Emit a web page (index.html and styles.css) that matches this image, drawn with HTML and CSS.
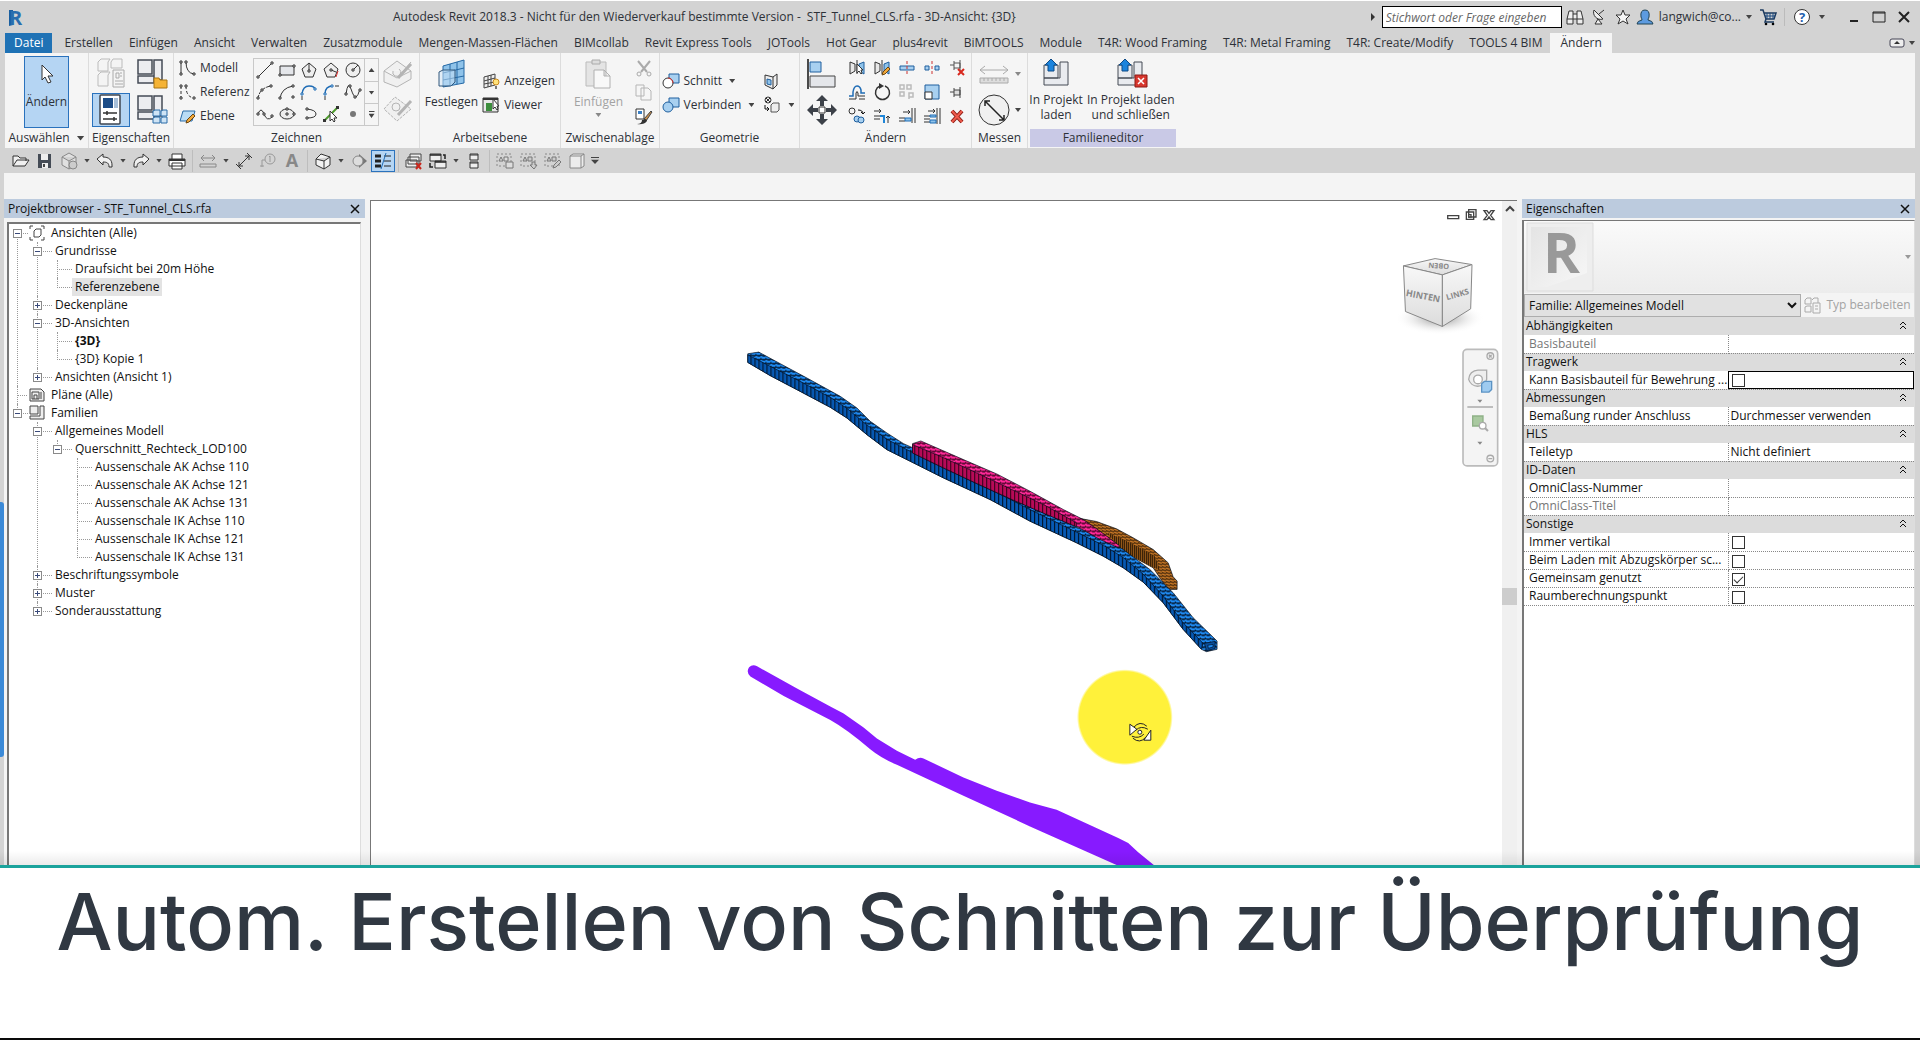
FILE: index.html
```html
<!DOCTYPE html>
<html lang="de">
<head>
    <meta charset="UTF-8">
    <meta name="viewport" content="width=device-width, initial-scale=1.0">
    <title>Autodesk Revit 2018.3 - STF_Tunnel_CLS.rfa</title>
    <link rel="stylesheet" href="styles.css">
</head>
<body>
    <div class="app">
        <header class="titlebar">
            <svg class="logo" width="20" height="30" viewBox="0 0 20 30"><path d="M2 8h4v15l-4 1z" fill="#1b5fa0"/><text x="2" y="23" font-size="20" font-weight="700" fill="#2a6eae">R</text></svg>
            <h1 class="title"><span>Autodesk Revit 2018.3 - Nicht für den Wiederverkauf bestimmte Version -</span><span>STF_Tunnel_CLS.rfa - 3D-Ansicht: {3D}</span></h1>
            <div class="infocenter">
                <svg width="6" height="10" viewBox="0 0 6 10"><path d="M1 1l4 4-4 4z" fill="#333"/></svg>
                <input type="text" class="search" aria-label="Suche" placeholder="Stichwort oder Frage eingeben">
                <button class="slot" aria-label="Suchen"><svg width="18" height="18" viewBox="0 0 18 18"><path d="M3 3h4v3h4V3h4l2 8v5h-6v-5H7v5H1v-5z" fill="#eee" stroke="#333"/><path d="M1 11h6M11 11h6M7 6v5M11 6v5" stroke="#333"/></svg></button>
                <button class="slot" aria-label="Abonnement"><svg width="16" height="18" viewBox="0 0 16 18"><path d="M3 2c-2 5 3 11 9 9zM4 16l3-5 4 5zM8 6l5-4" fill="#eee" stroke="#333"/></svg></button>
                <button class="slot" aria-label="Favoriten"><svg width="18" height="18" viewBox="0 0 18 18"><path d="M9 2l2 5h5l-4 4 2 5-5-3-5 3 2-5-4-4h5z" fill="#f5f5f5" stroke="#333"/></svg></button>
                <button class="account"><svg width="18" height="18" viewBox="0 0 18 18"><path d="M1 16q0-3 5-4 0-1-1-3-1-7 4-7t4 7q-1 2-1 3 5 1 5 4z" fill="#5d9be0" stroke="#245"/></svg>langwich@co...<i class="arrow"></i></button>
                <button class="slot" aria-label="App Store"><svg width="18" height="18" viewBox="0 0 18 18"><path d="M1 2h3l3 9h8l2-6H5M7 11l-1 3h9" fill="none" stroke="#1d3b60" stroke-width="1.5"/><path d="M8 5v6M11 5v6M14 5v6M6 8h10" stroke="#1d4b80"/><circle cx="7" cy="16" r="1.3"/><circle cx="14" cy="16" r="1.3"/></svg></button>
                <button class="help" aria-label="Hilfe"><svg width="18" height="18" viewBox="0 0 18 18"><circle cx="9" cy="9" r="7.5" fill="#fff" stroke="#333"/><text x="9" y="14" font-size="13" font-weight="700" text-anchor="middle" fill="#1f5fae">?</text></svg><i class="arrow"></i></button>
                <button class="win" aria-label="Minimieren"><svg width="14" height="14" viewBox="0 0 14 14"><path d="M3 11h8" stroke="#222" stroke-width="2"/></svg></button>
                <button class="win" aria-label="Maximieren"><svg width="14" height="14" viewBox="0 0 14 14"><path d="M1 2h12v10H1zM1 3h12" fill="none" stroke="#222"/></svg></button>
                <button class="win" aria-label="Schließen"><svg width="14" height="14" viewBox="0 0 14 14"><path d="M2 2l10 10M12 2L2 12" stroke="#222" stroke-width="2"/></svg></button>
            </div>
        </header>

        <nav class="tabs">
            <a href="#" class="file">Datei</a><a href="#">Erstellen</a><a href="#">Einfügen</a><a href="#">Ansicht</a><a href="#">Verwalten</a><a href="#">Zusatzmodule</a><a href="#">Mengen-Massen-Flächen</a><a href="#">BIMcollab</a><a href="#">Revit Express Tools</a><a href="#">JOTools</a><a href="#">Hot Gear</a><a href="#">plus4revit</a><a href="#">BiMTOOLS</a><a href="#">Module</a><a href="#">T4R: Wood Framing</a><a href="#">T4R: Metal Framing</a><a href="#">T4R: Create/Modify</a><a href="#">TOOLS 4 BIM</a><a href="#" class="active">Ändern</a>
            <button class="minimize" aria-label="Multifunktionsleiste"><svg width="16" height="10" viewBox="0 0 16 10"><rect x="1" y="1" width="14" height="8" rx="2" fill="#eee" stroke="#445"/><path d="M5 6l3-3 3 3z" fill="#333"/></svg><i class="arrow"></i></button>
        </nav>

        <div class="ribbon">
            <section class="panel auswaehlen">
                <div class="tools">
                    <button class="big selected"><svg width="16" height="22" viewBox="0 0 16 22"><path d="M3 2v15l3-3 3 6 3-1-3-6h5z" fill="#fff" stroke="#333"/></svg><span>Ändern</span></button>
                </div>
                <h2>Auswählen<i class="arrow wide"></i></h2>
            </section>
            <section class="panel eigenschaften">
                <div class="tools props">
                    <button aria-label="Typeigenschaften"><svg width="32" height="32" viewBox="0 0 32 32"><path d="M3 4l3-3h9l-2 3v9H3zM16 4l2-3h9v9h-11zM3 17l3-3h9l-2 3v11H3z" fill="#f4f4f4" stroke="#bbb"/><path d="M18 12h11v17H18z" fill="#f4f4f4" stroke="#aaa"/><path d="M21 15h3v5h-3zM25 15h2M25 18h2M20 23h8M20 26h8" stroke="#aaa" fill="none"/></svg></button>
                    <button aria-label="Familienkategorie"><svg width="32" height="32" viewBox="0 0 32 32"><path d="M2 2h14v14H2zM18 2h8v20h-8zM2 18h16v7H2z" fill="#ecedf0" stroke="#444b55" stroke-width="1.5"/><path d="M18 20h5l1 2h7v8H18z" fill="#f5b335" stroke="#a87412"/></svg></button>
                    <button class="selected" aria-label="Eigenschaften"><svg width="32" height="32" viewBox="0 0 32 32"><rect x="5" y="1" width="20" height="29" rx="1" fill="#fff" stroke="#3f4650" stroke-width="1.5"/><path d="M8 4h10v10H8z" fill="#1c4c86"/><path d="M19 4h4v10h-4z" fill="#a7bfd8"/><path d="M8 19h14M8 25h14M12 17v4M19 23v4" stroke="#333" stroke-width="1.5"/></svg></button>
                    <button aria-label="Familientypen"><svg width="32" height="32" viewBox="0 0 32 32"><path d="M2 2h14v14H2zM18 2h8v20h-8zM2 18h16v7H2z" fill="#ecedf0" stroke="#444b55" stroke-width="1.5"/><path d="M17 17l2-1h5v6h-7zM25 17l2-1h4v6h-6zM17 24l2-1h5v6h-7zM25 24l2-1h4v6h-6z" fill="#cfe4f5" stroke="#2a6ca8"/></svg></button>
                </div>
                <h2>Eigenschaften</h2>
            </section>
            <section class="panel zeichnen">
                <div class="tools">
                    <div class="stack three">
                        <button><svg width="17" height="17" viewBox="0 0 17 17"><path d="M2 2v13M7 2q0 11 8 12" fill="none" stroke="#333"/><path d="M1 1h2v2H1zM1 13h2v2H1zM6 1h2v2H6zM14 13h2v2h-2z" fill="#fff" stroke="#333"/></svg>Modell</button>
                        <button><svg width="17" height="17" viewBox="0 0 17 17"><path d="M2 2v13M7 2q0 11 8 12" fill="none" stroke="#333" stroke-dasharray="3 2"/><path d="M1 1h2v2H1zM1 13h2v2H1zM6 1h2v2H6zM14 13h2v2h-2z" fill="#fff" stroke="#333"/></svg>Referenz</button>
                        <button><svg width="17" height="17" viewBox="0 0 17 17"><path d="M4 3h12l-3 10H1z" fill="#b9dcf5" stroke="#2a6ca8"/><path d="M7 15l1-3 6-6 2 2-6 6z" fill="#f2a93b" stroke="#694511"/></svg>Ebene</button>
                    </div>
                    <div class="gallery">
                        <div class="shapes">
                            <button aria-label="Linie"><svg width="18" height="18" viewBox="0 0 18 18"><path d="M2 16L16 2" stroke="#333"/><path d="M1 15h2v2H1zM15 1h2v2h-2z" fill="#fff" stroke="#333"/></svg></button>
                            <button aria-label="Rechteck"><svg width="18" height="18" viewBox="0 0 18 18"><path d="M2 5h14v9H2z" fill="#e4e6ea" stroke="#333"/><path d="M1 13h2v2H1zM15 4h2v2h-2z" fill="#fff" stroke="#333"/></svg></button>
                            <button aria-label="Polygon innen"><svg width="18" height="18" viewBox="0 0 18 18"><path d="M9 2l7 6-3 8H5L2 8z" fill="#eee" stroke="#333"/><path d="M9 2v7" stroke="#333"/><path d="M8 9h2v2H8z" fill="#fff" stroke="#333"/></svg></button>
                            <button aria-label="Polygon außen"><svg width="18" height="18" viewBox="0 0 18 18"><path d="M9 2l7 6-3 8H5L2 8z" fill="#eee" stroke="#333"/><path d="M9 9l5 2" stroke="#333"/><path d="M16 10l-2 6" stroke="#d33"/><path d="M8 8h2v2H8z" fill="#fff" stroke="#333"/></svg></button>
                            <button aria-label="Kreis"><svg width="18" height="18" viewBox="0 0 18 18"><circle cx="9" cy="9" r="7" fill="#eee" stroke="#333"/><path d="M9 9l5-5" stroke="#333"/><path d="M8 8h2v2H8z" fill="#fff" stroke="#333"/></svg></button>
                            <button aria-label="Bogen"><svg width="18" height="18" viewBox="0 0 18 18"><path d="M2 16Q3 5 15 3" fill="none" stroke="#333" stroke-dasharray="4 1"/><path d="M1 14h2v2H1zM5 6h2v2H5zM14 2h2v2h-2z" fill="#fff" stroke="#333"/></svg></button>
                            <button aria-label="Mittelpunktbogen"><svg width="18" height="18" viewBox="0 0 18 18"><path d="M2 16Q3 5 15 3" fill="none" stroke="#333"/><path d="M1 14h2v2H1zM14 2h2v2h-2z" fill="#fff" stroke="#333"/><path d="M13 14h4M15 12v4" stroke="#333"/></svg></button>
                            <button aria-label="Tangentialbogen"><svg width="18" height="18" viewBox="0 0 18 18"><path d="M2 11Q3 3 9 3t6 4" fill="none" stroke="#1f6cb5" stroke-width="1.5"/><path d="M1 10h2v2H1zM14 5h2v2h-2z" fill="#fff" stroke="#1f6cb5"/><path d="M2 13v4" stroke="#333"/></svg></button>
                            <button aria-label="Abrundung"><svg width="18" height="18" viewBox="0 0 18 18"><path d="M3 11q0-8 8-8" fill="none" stroke="#1f6cb5" stroke-width="1.5"/><path d="M2 10h2v2H2zM9 2h2v2H9z" fill="#fff" stroke="#1f6cb5"/><path d="M3 13v4M13 3h4" stroke="#333"/></svg></button>
                            <button aria-label="Spline"><svg width="18" height="18" viewBox="0 0 18 18"><path d="M2 11q2-14 5-5t5 8 4-8" fill="none" stroke="#333"/><path d="M5 2h2v2H5zM1 10h2v2H1zM10 13h2v2h-2zM15 6h2v2h-2z" fill="#fff" stroke="#333"/></svg></button>
                            <button aria-label="Spline durch Punkte"><svg width="18" height="18" viewBox="0 0 18 18"><path d="M2 9q3-8 6 0t8 3" fill="none" stroke="#333"/><path d="M1 8h2v2H1zM7 8h2v2H7zM15 10h2v2h-2z" fill="#fff" stroke="#333"/></svg></button>
                            <button aria-label="Ellipse"><svg width="18" height="18" viewBox="0 0 18 18"><ellipse cx="9" cy="9" rx="7" ry="5" fill="#eee" stroke="#333"/><path d="M8 8h2v2H8zM15 8h2v2h-2zM8 3h2v2H8z" fill="#fff" stroke="#333"/></svg></button>
                            <button aria-label="Teilellipse"><svg width="18" height="18" viewBox="0 0 18 18"><path d="M7 4q9 1 9 5t-9 4" fill="none" stroke="#333"/><path d="M6 3h2v2H6zM6 12h2v2H6z" fill="#fff" stroke="#333"/></svg></button>
                            <button aria-label="Linien auswählen"><svg width="18" height="18" viewBox="0 0 18 18"><path d="M2 16L16 2" stroke="#4d9a2c" stroke-width="2"/><path d="M1 14h3v3H1zM14 1h3v3h-3z" fill="#333"/><path d="M8 6v10l2-2 2 3 1-1-1-3h3z" fill="#fff" stroke="#333"/></svg></button>
                            <button aria-label="Punktelement"><svg width="18" height="18" viewBox="0 0 18 18"><circle cx="9" cy="9" r="3" fill="#777"/></svg></button>
                        </div>
                        <div class="spin"><button aria-label="Hoch"><i class="arrow up"></i></button><button aria-label="Runter"><i class="arrow"></i></button><button aria-label="Mehr"><i class="arrow bar"></i></button></div>
                    </div>
                    <div class="stack two dim">
                        <button aria-label="Auf Fläche"><svg width="30" height="30" viewBox="0 0 30 30"><path d="M1 12L14 2l14 10v8L14 28 1 23zM1 12l13 7 14-7M10 12a4 4 0 1 0 6-2M16 17L28 3" fill="#f0f0f0" stroke="#b4b4b4"/><path d="M15 19L28 5" stroke="#b4b4b4" stroke-width="3"/></svg></button>
                        <button aria-label="Auf Arbeitsebene"><svg width="30" height="30" viewBox="0 0 30 30"><path d="M1 14L12 2l16 12-14 12z" fill="#f0f0f0" stroke="#b4b4b4" stroke-dasharray="3 1"/><circle cx="13" cy="12" r="4" fill="none" stroke="#b4b4b4"/><path d="M15 20L28 6" stroke="#b4b4b4" stroke-width="3"/></svg></button>
                    </div>
                </div>
                <h2>Zeichnen</h2>
            </section>
            <section class="panel arbeitsebene">
                <div class="tools">
                    <button class="big"><svg width="30" height="32" viewBox="0 0 30 32"><path d="M6 8l21-6v23L6 29z" fill="#8fc3ea" stroke="#2468a5"/><path d="M13 6v22M20 4v22M6 15l21-5M6 22l21-4" stroke="#2468a5"/><path d="M2 14l4-2h12v12l-4 4H2z" fill="#cfe6f7" fill-opacity=".5" stroke="#33597d"/></svg><span>Festlegen</span></button>
                    <div class="stack two">
                        <button><svg width="18" height="18" viewBox="0 0 18 18"><path d="M2 5l11-3v11L2 16zM6 4v11M9 3v11M2 9l11-3M2 12l11-2" fill="#eee" stroke="#444"/><circle cx="14" cy="10" r="3" fill="#ffe27a" stroke="#c8881d"/><path d="M13 14h2v3h-2z" fill="#777"/></svg>Anzeigen</button>
                        <button><svg width="18" height="18" viewBox="0 0 18 18"><path d="M1 2h15v14H1z" fill="#e8e8e8" stroke="#333"/><path d="M1 3h15" stroke="#333" stroke-width="2"/><path d="M4 7h6v8H4z" fill="#3c8d3c"/><path d="M11 3v10l2-2 2 3 1-1-1-3h2z" fill="#fff" stroke="#333"/></svg>Viewer</button>
                    </div>
                </div>
                <h2>Arbeitsebene</h2>
            </section>
            <section class="panel zwischenablage">
                <div class="tools">
                    <button class="big dim"><svg width="28" height="32" viewBox="0 0 28 32"><path d="M2 4h20v24H2z" fill="#e4e4e4" stroke="#bbb"/><path d="M8 2h8v4H8z" fill="#ddd" stroke="#aaa"/><path d="M10 12h10l6 6v12H10zM20 12v6h6" fill="#f8f8f8" stroke="#b0b0b0"/></svg><span>Einfügen</span><i class="arrow"></i></button>
                    <div class="stack three">
                        <button aria-label="Ausschneiden"><svg width="18" height="17" viewBox="0 0 18 17"><path d="M3 1l9 11M15 1L6 12" stroke="#aaa" stroke-width="2"/><circle cx="4" cy="14" r="2" fill="none" stroke="#aaa"/><circle cx="14" cy="14" r="2" fill="none" stroke="#aaa"/></svg></button>
                        <button aria-label="Kopieren"><svg width="18" height="17" viewBox="0 0 18 17"><path d="M1 1h8v11H1zM6 4h7l3 3v9H6z" fill="#f6f6f6" stroke="#b5b5b5"/></svg></button>
                        <button aria-label="Eigenschaften anpassen"><svg width="18" height="17" viewBox="0 0 18 17"><path d="M1 1h8v10H1z" fill="#fff" stroke="#333"/><path d="M3 3h4v3H3z" fill="#3a7fc4"/><path d="M9 11l7-8 1 1-6 9z" fill="#c88d4c" stroke="#444"/><path d="M2 16q5 0 5-4l4-1 1 2q-3 4-10 3z" fill="#333"/></svg></button>
                    </div>
                </div>
                <h2>Zwischenablage</h2>
            </section>
            <section class="panel geometrie">
                <div class="tools">
                    <div class="stack two">
                        <button><svg width="18" height="18" viewBox="0 0 18 18"><path d="M7 2h10v9H7z" fill="#a8d0f0" stroke="#1f5f9e"/><circle cx="6" cy="11" r="5" fill="#fff" stroke="#333"/><path d="M6 6a5 5 0 0 1 5 5" fill="none" stroke="#d33"/></svg>Schnitt<i class="arrow"></i></button>
                        <button><svg width="18" height="18" viewBox="0 0 18 18"><path d="M7 2h10v9H7z" fill="#a8d0f0" stroke="#1f5f9e"/><circle cx="6" cy="11" r="5" fill="#a8d0f0" stroke="#1f5f9e"/></svg>Verbinden<i class="arrow"></i></button>
                    </div>
                    <div class="stack two">
                        <button aria-label="Flächen teilen"><svg width="18" height="18" viewBox="0 0 18 18"><path d="M2 3l8 2 4-3v11l-4 4-8-4zM10 5v12" fill="#eee" stroke="#333"/><path d="M4 7l4 1v5l-4-1z" fill="#8fc3ea" stroke="#1f5f9e"/></svg></button>
                        <button aria-label="Verbindung"><svg width="18" height="18" viewBox="0 0 18 18"><circle cx="5" cy="4" r="3" fill="none" stroke="#333"/><path d="M3 2l4 4M7 2L3 6" stroke="#333"/><path d="M8 9l2-2h6v7l-2 2H8z" fill="#eee" stroke="#555"/><path d="M2 9v4h3M4 11l2 2-2 2" fill="none" stroke="#111"/></svg><i class="arrow"></i></button>
                    </div>
                </div>
                <h2>Geometrie</h2>
            </section>
            <section class="panel aendern">
                <div class="tools">
                    <div class="stack two">
                        <button aria-label="Ausrichten"><svg width="32" height="32" viewBox="0 0 32 32"><path d="M2 1v30" stroke="#111" stroke-width="1.5"/><path d="M4 4h11v10H4z" fill="#a8d0f0" stroke="#1f5f9e"/><path d="M4 18h25v11H4z" fill="#e4e6ea" stroke="#444"/></svg></button>
                        <button aria-label="Verschieben"><svg width="32" height="32" viewBox="0 0 32 32"><path d="M16 1l6 6h-4v5h-4V7h-4zM16 31l6-6h-4v-5h-4v5h-4zM1 16l6-6v4h5v4H7v4zM31 16l-6-6v4h-5v4h5v4z" fill="#3c4149"/><path d="M13 13h6v6h-6z" fill="#fff" stroke="#333"/></svg></button>
                    </div>
                    <div class="modify">
                        <button aria-label="Spiegeln Achse wählen"><svg width="18" height="18" viewBox="0 0 18 18"><path d="M2 3l5 2v7l-5 3z" fill="#e8e8e8" stroke="#333"/><path d="M16 3l-5 2v7l5 3z" fill="#8fc3ea" stroke="#1f5f9e"/><path d="M9 1v14" stroke="#333"/><path d="M9 5v9l2-2 2 3 1-1-1-3h2z" fill="#fff" stroke="#333"/></svg></button>
                        <button aria-label="Spiegeln Achse zeichnen"><svg width="18" height="18" viewBox="0 0 18 18"><path d="M2 3l5 2v7l-5 3z" fill="#e8e8e8" stroke="#333"/><path d="M16 3l-5 2v7l5 3z" fill="#8fc3ea" stroke="#1f5f9e"/><path d="M9 1v14" stroke="#333"/><path d="M9 16l1-3 5-5 2 2-5 5z" fill="#f2a93b" stroke="#694511"/></svg></button>
                        <button aria-label="Element teilen"><svg width="18" height="18" viewBox="0 0 18 18"><path d="M2 7h14v4H2z" fill="#a8d0f0" stroke="#1f5f9e"/><path d="M9 2v14" stroke="#c33" stroke-dasharray="3 2"/></svg></button>
                        <button aria-label="Mit Lücke teilen"><svg width="18" height="18" viewBox="0 0 18 18"><path d="M2 7h4v4H2zM12 7h4v4h-4z" fill="#a8d0f0" stroke="#1f5f9e"/><path d="M9 2v14" stroke="#c33" stroke-dasharray="3 2"/></svg></button>
                        <button aria-label="Lösen"><svg width="18" height="18" viewBox="0 0 18 18"><path d="M2 6h4M6 2v9M6 4h6v5H6M12 1v11" fill="none" stroke="#555"/><path d="M10 10l6 6M16 10l-6 6" stroke="#d8281e" stroke-width="2"/></svg></button>
                        <button aria-label="Versatz"><svg width="18" height="18" viewBox="0 0 18 18"><path d="M1 13h4V9q1-6 4-6t4 4v3h4" fill="none" stroke="#1f6cb5" stroke-width="1.5"/><path d="M1 16h7v-6q1-3 2 0v3h7M11 16h6" fill="none" stroke="#333"/></svg></button>
                        <button aria-label="Drehen"><svg width="18" height="18" viewBox="0 0 18 18"><path d="M12 3a7 7 0 1 1-5 0" fill="none" stroke="#333" stroke-width="1.5"/><path d="M6 0l5 3-5 3z" fill="#333"/></svg></button>
                        <button aria-label="Reihe"><svg width="18" height="18" viewBox="0 0 18 18"><path d="M2 2h4v4H2zM9 2h4v4H9zM2 9h4v4H2zM11 16v-6h4v4h-4" fill="none" stroke="#bbb" stroke-width="1.5"/></svg></button>
                        <button aria-label="Skalieren"><svg width="18" height="18" viewBox="0 0 18 18"><path d="M2 2h14v14H2z" fill="#a8d0f0" stroke="#1f5f9e"/><path d="M2 9h7v7H2z" fill="#fff" stroke="#333"/></svg></button>
                        <button aria-label="Fixieren"><svg width="18" height="18" viewBox="0 0 18 18"><path d="M2 9h4M6 5v9M6 7h6v5H6M12 4v11" fill="#ddd" stroke="#444"/></svg></button>
                        <button aria-label="Kopieren"><svg width="18" height="18" viewBox="0 0 18 18"><circle cx="4" cy="4" r="3" fill="none" stroke="#333"/><path d="M10 3q5 0 5 4M13 5l2 2 2-2" fill="none" stroke="#111"/><circle cx="9" cy="12" r="3" fill="#a8d0f0" stroke="#1f5f9e"/><circle cx="13" cy="13" r="3" fill="#a8d0f0" stroke="#1f5f9e"/></svg></button>
                        <button aria-label="Stutzen Ecke"><svg width="18" height="18" viewBox="0 0 18 18"><path d="M1 4h7M6 2l2 2-2 2M15 16V9M13 11l2-2 2 2M1 12h6M1 9h6" fill="none" stroke="#333"/><path d="M7 9h4v7" fill="none" stroke="#1f86d8" stroke-width="2"/></svg></button>
                        <button aria-label="Stutzen einzeln"><svg width="18" height="18" viewBox="0 0 18 18"><path d="M5 5h7M10 3l2 2-2 2M1 11h6M1 14h6M14 1v15M17 1v15" fill="none" stroke="#333"/><path d="M7 11h6v3H7z" fill="#8fc3ea" stroke="#1f6cb5"/></svg></button>
                        <button aria-label="Stutzen mehrere"><svg width="18" height="18" viewBox="0 0 18 18"><path d="M5 4h7M10 2l2 2-2 2M1 9h6M1 12h6M1 15h6M14 1v16M17 1v16" fill="none" stroke="#333"/><path d="M7 8h6v2H7zM7 13h6v3H7z" fill="#8fc3ea" stroke="#1f6cb5"/></svg></button>
                        <button aria-label="Löschen"><svg width="18" height="18" viewBox="0 0 18 18"><path d="M4 4l10 11M14 4L4 15" stroke="#8c1b14" stroke-width="4"/><path d="M4 4l10 11M14 4L4 15" stroke="#ee5a4c" stroke-width="2"/></svg></button>
                    </div>
                </div>
                <h2>Ändern</h2>
            </section>
            <section class="panel messen">
                <div class="tools">
                    <div class="stack two">
                        <button class="dim" aria-label="Messen"><svg width="32" height="32" viewBox="0 0 32 32"><path d="M2 12h28M7 8l-5 4 5 4M25 8l5 4-5 4" fill="none" stroke="#aaa"/><path d="M2 20h28v5H2zM6 20v3M10 20v3M14 20v3M18 20v3M22 20v3M26 20v3" fill="#ddd" stroke="#aaa"/></svg><i class="arrow"></i></button>
                        <button aria-label="Bemaßung"><svg width="32" height="32" viewBox="0 0 32 32"><circle cx="16" cy="16" r="15" fill="#f0f0f0" stroke="#333"/><path d="M7 7l19 19M7 12V7h5M26 21v5h-5" fill="none" stroke="#222" stroke-width="1.5"/></svg><i class="arrow"></i></button>
                    </div>
                </div>
                <h2>Messen</h2>
            </section>
            <section class="panel familieneditor">
                <div class="tools">
                    <button class="big"><svg width="30" height="30" viewBox="0 0 30 30"><path d="M3 7h14v13H3zM19 4h8v23H3v-7h16z" fill="#e9ebef" stroke="#444b55"/><path d="M10 1l6 6h-3v6H7V7H4z" fill="#1c84dd" stroke="#0d4a86"/></svg><span>In Projekt<br>laden</span></button>
                    <button class="big"><svg width="32" height="30" viewBox="0 0 32 30"><path d="M3 7h14v13H3zM19 4h8v23H3v-7h16z" fill="#e9ebef" stroke="#444b55"/><path d="M10 1l6 6h-3v6H7V7H4z" fill="#1c84dd" stroke="#0d4a86"/><path d="M20 17h12v12H20z" fill="#d8372e" stroke="#8c1b14"/><path d="M23 20l6 6M29 20l-6 6" stroke="#fff" stroke-width="1.5"/></svg><span>In Projekt laden<br>und schließen</span></button>
                </div>
                <h2>Familieneditor</h2>
            </section>
        </div>

        <div class="quick">
            <button aria-label="Öffnen"><svg width="18" height="18" viewBox="0 0 18 18"><path d="M1 14V4h5l2 2h6v3M1 14l4-6h12l-4 6z" fill="#f0f0f0" stroke="#333"/></svg></button>
            <button aria-label="Speichern"><svg width="18" height="18" viewBox="0 0 18 18"><path d="M2 2h13v14H2z" fill="#444b55"/><path d="M5 2h7v6H5zM6 11h6v5H6z" fill="#eee"/><path d="M7 12h2v3H7z" fill="#444"/></svg></button>
            <button class="dim" aria-label="Synchronisieren"><svg width="18" height="18" viewBox="0 0 18 18"><path d="M2 5l7-4 7 4v8l-7 4-7-4zM2 5l7 4 7-4M9 9v8" fill="#e0e0e0" stroke="#888"/><circle cx="13" cy="13" r="4" fill="#ccc" stroke="#888"/></svg></button>
            <i class="arrow"></i>
            <button aria-label="Rückgängig"><svg width="18" height="18" viewBox="0 0 18 18"><path d="M1 7l6-5v3c6 0 9 3 9 8v2h-3c0-4-2-5-6-5v3z" fill="#f0f0f0" stroke="#333"/></svg></button>
            <i class="arrow"></i>
            <button aria-label="Wiederherstellen"><svg width="18" height="18" viewBox="0 0 18 18"><path d="M17 7l-6-5v3c-6 0-9 3-9 8v2h3c0-4 2-5 6-5v3z" fill="#f0f0f0" stroke="#333"/></svg></button>
            <i class="arrow"></i>
            <button aria-label="Drucken"><svg width="18" height="18" viewBox="0 0 18 18"><path d="M4 2h10v6H4zM1 7h16v7H1zM4 11h10v6H4z" fill="#fff" stroke="#333"/><path d="M1 8h16" stroke="#333" stroke-width="2"/></svg></button>
            <span class="sep"></span>
            <button class="dim" aria-label="Messen"><svg width="18" height="18" viewBox="0 0 18 18"><path d="M2 6h14M5 3L2 6l3 3M13 3l3 3-3 3M1 12h16v3H1z" fill="none" stroke="#888"/></svg></button>
            <i class="arrow"></i>
            <button aria-label="Bemaßung"><svg width="18" height="18" viewBox="0 0 18 18"><path d="M4 14L14 4M4 10v4h4M10 4h4v4M1 12l5 5M12 1l5 5" fill="none" stroke="#333"/></svg></button>
            <button class="dim" aria-label="Beschriftung"><svg width="18" height="18" viewBox="0 0 18 18"><circle cx="11" cy="7" r="5" fill="none" stroke="#999"/><path d="M10 5l1-1v6M6 8H3v7M1 14h4" fill="none" stroke="#999"/></svg></button>
            <button class="dim" aria-label="Text"><svg width="18" height="18" viewBox="0 0 18 18"><text x="9" y="15" font-size="18" font-weight="700" text-anchor="middle" fill="#888">A</text></svg></button>
            <span class="sep"></span>
            <button aria-label="3D-Ansicht"><svg width="18" height="18" viewBox="0 0 18 18"><path d="M2 7l5-5 9 3v8l-6 4-8-4zM10 9v8M2 7l8 2 6-4" fill="#f2f2f2" stroke="#333"/></svg></button>
            <i class="arrow"></i>
            <button class="dim" aria-label="Schnitt"><svg width="18" height="18" viewBox="0 0 18 18"><path d="M9 2l8 7-8 7z" fill="#777"/><circle cx="8" cy="9" r="5" fill="#ddd" stroke="#888"/></svg></button>
            <button class="selected" aria-label="Dünne Linien"><svg width="18" height="18" viewBox="0 0 18 18"><path d="M1 4h6M1 9h6M1 14h6" stroke="#222" stroke-width="3"/><path d="M10 4h7M10 9h7M10 14h7" stroke="#222"/><path d="M7 17L12 1" stroke="#1f6cb5"/></svg></button>
            <span class="sep"></span>
            <button aria-label="Inaktive schließen"><svg width="18" height="18" viewBox="0 0 18 18"><path d="M5 2h11v7H5zM3 5h11v7H3zM1 8h11v7H1z" fill="#eee" stroke="#444"/><path d="M11 11l5 6M16 11l-5 6" stroke="#c8281e" stroke-width="2"/></svg></button>
            <button aria-label="Fenster wechseln"><svg width="18" height="18" viewBox="0 0 18 18"><path d="M1 2h11v7H1zM6 9h11v7H6z" fill="#eee" stroke="#333"/><path d="M1 3h11M6 10h11M14 3h2v4M1 11v4h3" fill="none" stroke="#222" stroke-width="1.5"/></svg></button>
            <i class="arrow"></i>
            <button aria-label="Benutzeroberfläche"><svg width="18" height="18" viewBox="0 0 18 18"><path d="M5 2h8v6H5zM5 10h8v6H5zM5 3h8M5 11h8" fill="#eee" stroke="#333"/></svg></button>
            <span class="sep"></span>
            <button class="dim" aria-label="Auswahl speichern"><svg width="18" height="18" viewBox="0 0 18 18"><path d="M1 2h14v12H1z" fill="none" stroke="#888" stroke-dasharray="2 2"/><path d="M3 9l2-4 2 4zM8 5h4v4H8zM10 10h7v6h-7z" fill="#ddd" stroke="#777"/></svg></button>
            <button class="dim" aria-label="Auswahl laden"><svg width="18" height="18" viewBox="0 0 18 18"><path d="M1 2h14v12H1z" fill="none" stroke="#888" stroke-dasharray="2 2"/><path d="M3 9l2-4 2 4zM8 5h4v4H8zM12 10h3v3h2l-3 4-4-4h2z" fill="#ccc" stroke="#777"/></svg></button>
            <button class="dim" aria-label="Auswahl bearbeiten"><svg width="18" height="18" viewBox="0 0 18 18"><path d="M1 2h14v12H1z" fill="none" stroke="#888" stroke-dasharray="2 2"/><path d="M3 9l2-4 2 4zM8 5h4v4H8zM9 16l1-3 5-5 2 2-5 5z" fill="#ccc" stroke="#777"/></svg></button>
            <button class="dim" aria-label="Quader"><svg width="18" height="18" viewBox="0 0 18 18"><path d="M2 4l3-2h11v12l-3 2H2zM2 4h11v12M13 4l3-2" fill="#ececec" stroke="#888"/></svg></button>
            <i class="arrow bar wide"></i>
        </div>

        <main class="workspace">
            <aside class="dock browser">
                <div class="dock-head"><h2>Projektbrowser - STF_Tunnel_CLS.rfa</h2><button aria-label="Schließen"><svg width="10" height="10" viewBox="0 0 10 10"><path d="M1 1l8 8M9 1L1 9" stroke="#111" stroke-width="1.5"/></svg></button></div>
                <div class="tree-box">
                    <ul class="tree">
                        <li><span class="row"><b class="toggle"></b><svg width="16" height="16" viewBox="0 0 16 16"><path d="M4 1H1v3M12 1h3v3M4 15H1v-3M12 15h3v-3M5 6l2-2h5v6l-2 2H5z" fill="none" stroke="#444"/></svg>Ansichten (Alle)</span>
                            <ul>
                                <li><span class="row"><b class="toggle"></b>Grundrisse</span>
                                    <ul>
                                        <li><span class="row leaf">Draufsicht bei 20m Höhe</span></li>
                                        <li><span class="row leaf"><mark>Referenzebene</mark></span></li>
                                    </ul>
                                </li>
                                <li><span class="row"><b class="toggle plus"></b>Deckenpläne</span></li>
                                <li><span class="row"><b class="toggle"></b>3D-Ansichten</span>
                                    <ul>
                                        <li><span class="row leaf"><strong>{3D}</strong></span></li>
                                        <li><span class="row leaf">{3D} Kopie 1</span></li>
                                    </ul>
                                </li>
                                <li><span class="row"><b class="toggle plus"></b>Ansichten (Ansicht 1)</span></li>
                            </ul>
                        </li>
                        <li><span class="row leaf"><svg width="16" height="16" viewBox="0 0 16 16"><path d="M1 2h11l3 3v9H1zM3 5h7v7H3zM5 12V8h3v4M12 5v7" fill="#eee" stroke="#444"/></svg>Pläne (Alle)</span></li>
                        <li><span class="row"><b class="toggle"></b><svg width="16" height="16" viewBox="0 0 16 16"><path d="M1 1h8v8H1zM11 1h4v13H1v-3h10z" fill="#eee" stroke="#444"/></svg>Familien</span>
                            <ul>
                                <li><span class="row"><b class="toggle"></b>Allgemeines Modell</span>
                                    <ul>
                                        <li><span class="row"><b class="toggle"></b>Querschnitt_Rechteck_LOD100</span>
                                            <ul>
                                                <li><span class="row leaf">Aussenschale AK Achse 110</span></li>
                                                <li><span class="row leaf">Aussenschale AK Achse 121</span></li>
                                                <li><span class="row leaf">Aussenschale AK Achse 131</span></li>
                                                <li><span class="row leaf">Aussenschale IK Achse 110</span></li>
                                                <li><span class="row leaf">Aussenschale IK Achse 121</span></li>
                                                <li><span class="row leaf">Aussenschale IK Achse 131</span></li>
                                            </ul>
                                        </li>
                                    </ul>
                                </li>
                                <li><span class="row"><b class="toggle plus"></b>Beschriftungssymbole</span></li>
                                <li><span class="row"><b class="toggle plus"></b>Muster</span></li>
                                <li><span class="row"><b class="toggle plus"></b>Sonderausstattung</span></li>
                            </ul>
                        </li>
                    </ul>
                </div>
            </aside>

            <section class="view">
                <svg class="model" viewBox="370 201 1131 665" preserveAspectRatio="xMinYMin meet">
                    <defs>
                        <pattern id="blueSide" width="12" height="12" patternUnits="userSpaceOnUse"><path d="M0 0h12v12H0z" fill="#0659b4"/><path d="M2 0v12" stroke="#000a18" stroke-width="3"/></pattern>
                        <pattern id="blueTop" width="15" height="12" patternUnits="userSpaceOnUse"><path d="M0 0h15v12H0z" fill="#000814"/><path d="M0 1l6 5h9" fill="none" stroke="#1f8cf5" stroke-width="7"/></pattern>
                        <pattern id="pinkSide" width="12" height="12" patternUnits="userSpaceOnUse"><path d="M0 0h12v12H0z" fill="#b80a58"/><path d="M2 0v12" stroke="#2a0014" stroke-width="3"/></pattern>
                        <pattern id="pinkTop" width="15" height="12" patternUnits="userSpaceOnUse"><path d="M0 0h15v12H0z" fill="#2a0014"/><path d="M0 1l6 5h9" fill="none" stroke="#ff2898" stroke-width="8"/></pattern>
                        <pattern id="orange" width="12" height="9" patternUnits="userSpaceOnUse"><path d="M0 0h12v9H0z" fill="#140a00"/><path d="M0 2l12 4" stroke="#e88b2c" stroke-width="5"/></pattern>
                        <pattern id="orangeSide" width="12" height="12" patternUnits="userSpaceOnUse"><path d="M0 0h12v12H0z" fill="#a3601b"/><path d="M1 0v12M7 0v12" stroke="#140a00" stroke-width="3"/></pattern>
                        <linearGradient id="shade" x1="0" y1="0" x2="0" y2="1"><stop offset="0" stop-color="#f8f8f8"/><stop offset="1" stop-color="#dcdcdc"/></linearGradient>
                        <radialGradient id="ground"><stop offset="0" stop-color="#888"/><stop offset="1" stop-color="#fff" stop-opacity="0"/></radialGradient>
                        <radialGradient id="spot"><stop offset=".95" stop-color="#fff13a"/><stop offset="1" stop-color="#fff13a" stop-opacity="0"/></radialGradient>
                    </defs>
                    <!-- tunnel tubes -->
                    <svg x="730" y="340" width="500" height="320" viewBox="0 0 1500 960" stroke-linejoin="round" stroke="#000a18" stroke-width="2">
                        <path d="M1040 535L1100 546 1160 568 1210 595 1270 630 1315 670 1330 712 1342 725V750H1315L1290 715 1270 685 1215 655 1170 625 1110 580z" fill="url(#orange)"/>
                        <path d="M1130 580L1170 595 1230 625 1275 650 1290 690 1270 685 1215 655 1170 625z" fill="url(#orangeSide)" stroke="none"/>
                        <path d="M52 42L85 37 150 72 230 115 330 170 380 205 420 245 470 280 520 312 560 330 700 400 800 450 900 495 1000 545 1100 590 1180 630 1260 690 1330 760 1390 835 1462 905V930L1430 937 1415 930 1360 870 1300 790 1240 728 1180 685 1120 650 1040 610 900 545 780 480 640 415 540 365 470 330 410 285 350 235 300 203 200 150 120 108 52 68z" fill="url(#blueTop)"/>
                        <path d="M52 45L120 80 200 120 300 173 350 206 410 256 470 299 540 335 640 383 780 448 900 510 1040 578 1120 617 1180 654 1240 704 1300 770 1360 850 1420 912 1415 930 1360 870 1300 790 1240 728 1180 685 1120 650 1040 610 900 545 780 480 640 415 540 365 470 330 410 285 350 235 300 203 200 150 120 108 52 68z" fill="url(#blueSide)"/>
                        <path d="M1424 912l32-6v22l-26 6z" fill="#0b4f9b"/><path d="M1434 918l16-3v8l-14 4z" fill="#1f8cf5"/>
                        <path d="M547 312L572 304 700 360 800 403 900 455 1000 510 1060 540 1110 575 1168 618V626L1110 600 1040 560 950 525 850 482 740 432 640 385 547 340z" fill="url(#pinkTop)"/>
                        <path d="M547 315L640 354 740 400 850 452 950 500 1040 550V562L950 525 850 482 740 432 640 385 547 340z" fill="url(#pinkSide)"/>
                    </svg>
                    <svg x="730" y="650" width="500" height="216" viewBox="0 0 1500 648">
                        <path d="M60 82Q46 68 56 54 66 44 80 51L200 118 300 172 340 193 400 235 440 268 500 305 555 332Q568 322 580 328L700 385 800 425 900 460 980 482 1165 567 1195 582 1225 610 1272 648H1160L900 532 700 440 500 347Q450 325 420 300 350 240 300 212L160 140z" fill="#871aff"/>
                    </svg>
                    <circle cx="1125" cy="718" r="48" fill="url(#spot)"/>
                    <!-- orbit cursor -->
                    <g fill="none" stroke="#222"><path d="M1147 727q-7-6-13 1M1148 730q-7-4-12 1M1133 739q7 6 13-1M1132 737q7 3 12-2"/><path d="M1130 725v11l7-6zM1151 731v10l-7 0z" fill="#fff"/><circle cx="1140" cy="733" r="2" fill="#fff"/></g>
                    <!-- view cube, navigation bar -->
                    <svg x="1380" y="195" width="540" height="420" viewBox="0 0 1620 1260">
                        <ellipse cx="181" cy="370" rx="134" ry="50" fill="url(#ground)"/>
                        <g stroke="#888" stroke-width="3" fill="url(#shade)"><path d="M72 213L167 191 278 209 189 240z"/><path d="M72 213L189 240V395L78 350z"/><path d="M189 240L278 209 274 342 189 395z"/></g>
                        <g fill="#888" font-size="27" font-weight="700" text-anchor="middle"><text x="131" y="313" transform="rotate(11 131 304)">HINTEN</text><text x="235" y="307" font-size="24" transform="rotate(-16 235 300)">LINKS</text><text x="178" y="219" font-size="22" transform="rotate(184 178 212)">OBEN</text></g>
                        <rect x="251" y="464" width="104" height="350" rx="12" fill="#f4f4f4" stroke="#bbb" stroke-width="5"/>
                        <g fill="none" stroke="#aaa" stroke-width="4"><circle cx="333" cy="484" r="10"/><path d="M329 480l8 8M337 480l-8 8M327 792h12M264 637h77"/><circle cx="333" cy="792" r="10"/><path d="M268 554a28 28 0 0 1 28-28h26v28a28 28 0 0 1-54 0z" fill="#eee"/><circle cx="296" cy="554" r="13" fill="#fff"/><path d="M307 567l8-7h22v24l-8 8h-22z" fill="#9ecbf0" stroke="#5b93c4"/><path d="M280 664h31v30h-31z" fill="#a9c9a0" stroke="#8fb187"/><circle cx="310" cy="693" r="10" fill="#fff"/><path d="M317 700l9 9" stroke-width="6"/></g>
                        <path d="M294 615h15l-7 9zM294 741h15l-7 9z" fill="#888"/>
                        <g fill="#fff" stroke="#444" stroke-width="4"><path d="M205 62h33v9h-33zM268 44h22v22h-22zM261 51h22v22h-22z"/><path d="M268 59h7v7h-7zM314 47h9l6 8 6-8h9l-10 14 10 13h-9l-6-8-6 8h-9l10-13z"/></g>
                    </svg>
                </svg>
                <div class="scrollbar"><svg width="15" height="16" viewBox="0 0 15 16"><path d="M4 10l4-4 4 4" fill="none" stroke="#444" stroke-width="2"/></svg><div class="thumb"></div></div>
            </section>

            <aside class="dock properties">
                <div class="dock-head"><h2>Eigenschaften</h2><button aria-label="Schließen"><svg width="10" height="10" viewBox="0 0 10 10"><path d="M1 1l8 8M9 1L1 9" stroke="#111" stroke-width="1.5"/></svg></button></div>
                <div class="prop-box">
                    <div class="preview"><svg width="66" height="68" viewBox="0 0 66 68"><defs><linearGradient id="tile" x1="0" y1="0" x2="1" y2="1"><stop offset="0" stop-color="#e4e4e4"/><stop offset="1" stop-color="#f7f7f7"/></linearGradient></defs><path d="M0 0h66v68H0z" fill="#eee" stroke="#ddd"/><path d="M4 4h56v46L20 64H4z" fill="url(#tile)"/><text x="16" y="50" font-size="56" font-weight="700" fill="#999">R</text></svg><i class="arrow"></i></div>
                    <div class="family"><select aria-label="Familie"><option>Familie: Allgemeines Modell</option></select><button disabled><svg width="17" height="17" viewBox="0 0 17 17"><path d="M1 3l2-2h4v6H1zM8 3l2-2h4v5M1 10l2-1h4v6H1zM9 6h7v10H9zM11 9h3M11 12h3" fill="none" stroke="#aaa"/></svg>Typ bearbeiten</button></div>
                    <table>
                        <colgroup><col class="name"><col></colgroup>
                        <tbody>
                            <tr><th colspan="2">Abhängigkeiten<svg class="fold" width="9" height="11" viewBox="0 0 9 11"><path d="M1 5l3-3 3 3M1 9l3-3 3 3"/></svg></th></tr>
                            <tr class="off"><td>Basisbauteil</td><td></td></tr>
                            <tr><th colspan="2">Tragwerk<svg class="fold" width="9" height="11" viewBox="0 0 9 11"><path d="M1 5l3-3 3 3M1 9l3-3 3 3"/></svg></th></tr>
                            <tr><td><label for="rebar">Kann Basisbauteil für Bewehrung ...</label></td><td class="focus"><input type="checkbox" id="rebar"></td></tr>
                            <tr><th colspan="2">Abmessungen<svg class="fold" width="9" height="11" viewBox="0 0 9 11"><path d="M1 5l3-3 3 3M1 9l3-3 3 3"/></svg></th></tr>
                            <tr><td>Bemaßung runder Anschluss</td><td>Durchmesser verwenden</td></tr>
                            <tr><th colspan="2">HLS<svg class="fold" width="9" height="11" viewBox="0 0 9 11"><path d="M1 5l3-3 3 3M1 9l3-3 3 3"/></svg></th></tr>
                            <tr><td>Teiletyp</td><td>Nicht definiert</td></tr>
                            <tr><th colspan="2">ID-Daten<svg class="fold" width="9" height="11" viewBox="0 0 9 11"><path d="M1 5l3-3 3 3M1 9l3-3 3 3"/></svg></th></tr>
                            <tr><td>OmniClass-Nummer</td><td></td></tr>
                            <tr class="off"><td>OmniClass-Titel</td><td></td></tr>
                            <tr><th colspan="2">Sonstige<svg class="fold" width="9" height="11" viewBox="0 0 9 11"><path d="M1 5l3-3 3 3M1 9l3-3 3 3"/></svg></th></tr>
                            <tr><td><label for="vertical">Immer vertikal</label></td><td><input type="checkbox" id="vertical"></td></tr>
                            <tr><td><label for="cut">Beim Laden mit Abzugskörper sc...</label></td><td><input type="checkbox" id="cut"></td></tr>
                            <tr><td><label for="shared">Gemeinsam genutzt</label></td><td><input type="checkbox" id="shared" checked></td></tr>
                            <tr><td><label for="room">Raumberechnungspunkt</label></td><td><input type="checkbox" id="room"></td></tr>
                        </tbody>
                    </table>
                </div>
            </aside>
        </main>
    </div>

    <footer class="caption"><p>Autom. Erstellen von Schnitten zur Überprüfung</p></footer>
</body>
</html>
```
FILE: styles.css
```css
* {
    box-sizing: border-box;
}

body {
    margin: 0;
    min-height: 100vh;
    display: flex;
    flex-direction: column;
    font-family: "Open Sans", "Noto Sans", sans-serif;
    font-size: 12px;
    line-height: 18px;
    color: #2d3138;
    background: #fff;
}

h1, h2, p, ul {
    margin: 0;
    padding: 0;
    font-size: inherit;
    font-weight: normal;
}

button {
    display: flex;
    align-items: center;
    justify-content: center;
    margin: 0;
    padding: 0;
    border: 0;
    background: none;
    font: inherit;
    color: inherit;
    white-space: nowrap;
}

svg {
    flex: none;
    display: block;
}
button svg,
.logo,
.preview svg {
    overflow: visible;
}

.arrow {
    flex: none;
    width: 6px;
    height: 4px;
    background: #444;
    clip-path: polygon(0 0, 100% 0, 50% 100%);
}
.arrow.wide {
    width: 8px;
    height: 5px;
}
.arrow.up {
    clip-path: polygon(50% 0, 100% 100%, 0 100%);
}
.arrow.bar {
    height: 7px;
    clip-path: polygon(0 0, 100% 0, 100% 15%, 0 15%, 0 40%, 100% 40%, 50% 100%, 0 40%);
}

.app {
    position: relative;
    flex: 1;
    display: flex;
    flex-direction: column;
    background: #d3d3d3;
}
/* screen recorder handle on the left edge */
.app::before {
    content: "";
    position: absolute;
    left: 0;
    bottom: 108px;
    width: 4px;
    height: 255px;
    border-radius: 0 3px 3px 0;
    background: #3b8ad8;
}
.app::after {
    content: "";
    position: absolute;
    left: 0;
    right: 0;
    bottom: 0;
    height: 14px;
    background: linear-gradient(rgba(0, 0, 0, 0), rgba(0, 0, 0, 0.08));
}

/* title bar */
.titlebar {
    display: flex;
    align-items: center;
    height: 33px;
    padding: 0 4px 0 7px;
    border-top: 1px solid #fff;
}
.title {
    flex: 1;
    display: flex;
    justify-content: center;
    gap: 6px;
    padding-left: 12px;
    white-space: nowrap;
}
.infocenter {
    display: flex;
    align-items: center;
    gap: 1px;
}
.search {
    width: 180px;
    height: 22px;
    margin: 0 1px 0 5px;
    padding: 0 3px;
    border: 1px solid #000;
    background: #fff;
    font: italic 12px "Open Sans", sans-serif;
}
.search::placeholder {
    color: #666;
    opacity: 1;
}
.slot {
    width: 23px;
}
.account {
    gap: 5px;
    margin-right: 3px;
}
.help {
    gap: 8px;
    margin: 0 16px 0 4px;
    padding-left: 8px;
    border-left: 1px solid #bbb;
}
.win {
    width: 24px;
}

/* ribbon tabs */
.tabs {
    display: flex;
    height: 20px;
    padding-left: 5px;
    line-height: 20px;
}
.tabs a {
    padding: 0 8px;
    color: inherit;
    text-decoration: none;
    white-space: nowrap;
}
.tabs .file {
    margin-right: 4px;
    padding: 0 9px;
    background: #1f72b5;
    color: #fff;
}
.tabs .active {
    padding: 0 10px;
    background: #f5f5f5;
}
.minimize {
    margin: 0 5px 0 auto;
    gap: 4px;
}

.ribbon {
    display: flex;
    height: 95px;
    margin: 0 5px;
    background: #f5f5f5;
}
.panel {
    display: flex;
    flex-direction: column;
    border-right: 1px solid #dcdcdc;
}
.panel h2 {
    display: flex;
    align-items: center;
    justify-content: center;
    gap: 7px;
    height: 18px;
    white-space: nowrap;
}
.tools {
    display: flex;
    height: 76px;
    padding-top: 3px;
    justify-content: center;
}
.big {
    flex-direction: column;
    justify-content: flex-start;
    line-height: 15px;
    padding-top: 2px;
    gap: 4px;
}
.selected {
    background: #b5d5f3;
    outline: 1px solid #2a72bd;
    outline-offset: -1px;
}
.dim {
    color: #a3a3a3;
}
.panel .dim .arrow {
    background: #888;
}
.stack {
    display: flex;
    flex-direction: column;
}
.stack button {
    justify-content: flex-start;
    height: 24px;
    gap: 4px;
}
.stack.two button {
    height: 36px;
}

.auswaehlen {
    width: 84px;
}
.auswaehlen .big {
    width: 45px;
    height: 72px;
    padding-top: 7px;
    gap: 9px;
}
.eigenschaften {
    width: 85px;
}
.props {
    display: grid;
    grid-template-columns: 38px 36px;
    grid-template-rows: 36px 34px;
    gap: 1px 4px;
}
.zeichnen {
    width: 246px;
}
.zeichnen .tools {
    justify-content: flex-start;
    padding-left: 5px;
}
.zeichnen .stack.three {
    width: 74px;
}
.zeichnen .stack.two {
    margin-left: 4px;
}
.gallery {
    display: flex;
    height: 68px;
    margin-top: 2px;
    border: 1px solid #c9c9c9;
}
.shapes {
    display: grid;
    grid-template-columns: repeat(5, 22px);
    grid-template-rows: repeat(3, 22px);
}
.spin {
    display: grid;
    grid-template-rows: repeat(3, 1fr);
    width: 14px;
    border-left: 1px solid #c9c9c9;
}
.spin button + button {
    border-top: 1px solid #c9c9c9;
}
.arbeitsebene {
    width: 141px;
}
.arbeitsebene .tools {
    gap: 4px;
}
.arbeitsebene .stack,
.geometrie .stack {
    padding-top: 13px;
}
.arbeitsebene .stack button,
.geometrie .stack button {
    height: 24px;
    gap: 4px;
}
.zwischenablage {
    width: 99px;
}
.zwischenablage .tools {
    justify-content: flex-end;
    gap: 12px;
    padding-right: 6px;
}
.geometrie {
    width: 140px;
}
.geometrie .tools {
    gap: 6px;
}
.geometrie .stack .arrow {
    margin: 0 3px;
}
.aendern {
    width: 172px;
}
.aendern .tools {
    gap: 6px;
    padding-left: 4px;
}
.modify {
    display: grid;
    grid-template-columns: repeat(5, 25px);
    grid-template-rows: repeat(3, 24px);
}
.messen {
    width: 56px;
}
.messen .stack button {
    gap: 5px;
}
.familieneditor {
    width: 148px;
    border: 0;
}
.familieneditor .tools {
    gap: 4px;
}
.familieneditor h2 {
    margin-left: 2px;
    background: #c9c9e6;
}

.quick {
    display: flex;
    align-items: center;
    height: 25px;
    padding-left: 9px;
}
.quick button {
    width: 24px;
    height: 22px;
}
.quick .arrow {
    margin: 0 3px;
}
.quick .arrow.wide {
    margin: 0 2px;
}
.sep {
    width: 1px;
    height: 22px;
    margin: 0 3px;
    background: #bdbdbd;
}

/* docks and drawing area */
.workspace {
    flex: 1;
    display: grid;
    grid-template-columns: 361px minmax(0, 1fr) 393px;
    gap: 5px;
    margin: 0 5px 0 4px;
    padding-top: 26px;
    background: #f4f4f4;
    color: #111;
}
.dock {
    display: flex;
    flex-direction: column;
    gap: 2px;
}
.browser {
    gap: 4px;
}
.dock-head {
    display: flex;
    align-items: center;
    justify-content: space-between;
    height: 19px;
    padding: 0 5px 0 4px;
    line-height: 19px;
    background: #bccbde;
}
.tree-box {
    flex: 1;
    margin: 0 4px 0 3px;
    border: solid #777;
    border-width: 2px 1px 0 2px;
    border-right-color: #ddd;
    background: #fff;
    padding: 0 4px;
}
.tree ul {
    padding-left: 20px;
}
.tree li {
    position: relative;
    list-style: none;
}
.tree li::before {
    content: "";
    position: absolute;
    left: 4px;
    top: 0;
    bottom: 0;
    border-left: 1px dotted #999;
}
.tree li:last-child::before {
    bottom: auto;
    height: 10px;
}
.tree > li:first-child::before {
    top: 10px;
}
.row {
    display: flex;
    align-items: center;
    height: 18px;
    line-height: 16px;
    white-space: nowrap;
}
.row svg {
    margin-right: 6px;
}
.row.leaf::before {
    content: "";
    width: 15px;
    margin: 0 3px 0 4px;
    border-top: 1px dotted #999;
}
.tree > li > .row.leaf::before {
    width: 10px;
    margin-right: 2px;
}
.row mark {
    margin: 0 -3px;
    padding: 1px 3px;
    background: #e3e3e3;
    color: inherit;
}
.toggle {
    position: relative;
    width: 9px;
    height: 9px;
    margin-right: 13px;
    border: 1px solid #8a8a8a;
    background: linear-gradient(#3a4a7a, #3a4a7a) center / 5px 1px no-repeat #fff;
}
.toggle.plus {
    background: linear-gradient(#3a4a7a, #3a4a7a) center / 5px 1px no-repeat, linear-gradient(#3a4a7a, #3a4a7a) center / 1px 5px no-repeat #fff;
}
.toggle::after {
    content: "";
    position: absolute;
    left: 9px;
    top: 3px;
    width: 9px;
    border-top: 1px dotted #999;
}
.tree > li > .row .toggle {
    margin-right: 7px;
}
.tree > li > .row .toggle::after {
    width: 5px;
}

.view {
    display: flex;
    margin-top: 1px;
    border: solid #777;
    border-width: 1px 0 0 1px;
    background: #fff;
}
.model {
    flex: 1;
    min-width: 0;
    height: 0;
    min-height: 100%;
}
.scrollbar {
    display: flex;
    flex-direction: column;
    width: 15px;
    background: #f0f0f0;
}
.thumb {
    height: 17px;
    margin-top: 371px;
    background: #cdcdcd;
}

.prop-box {
    flex: 1;
    border: solid #777;
    border-width: 1px 1px 0 2px;
    border-right-color: #ddd;
    background: #fff;
}
.preview {
    display: flex;
    align-items: center;
    justify-content: space-between;
    height: 72px;
    padding: 0 3px;
    background: linear-gradient(#fafafa, #ececec);
}
.preview .arrow {
    background: #999;
}
.family {
    display: flex;
    align-items: center;
    height: 24px;
    background: #f4f4f4;
}
.family select {
    width: 277px;
    height: 23px;
    padding: 0;
    border: 1px solid #adadad;
    border-radius: 0;
    background: #e1e1e1;
    font: inherit;
    color: inherit;
}
.family button {
    flex: 1;
    gap: 5px;
    color: #a3a3a3;
}
table {
    width: 100%;
    border-collapse: collapse;
    table-layout: fixed;
}
.name {
    width: 204px;
}
th, td {
    height: 18px;
    padding: 0 2px;
    line-height: 16px;
    text-align: left;
    font-weight: normal;
    white-space: nowrap;
}
th {
    background: #dcdcdc;
}
td {
    border-bottom: 1px dotted #888;
}
td:first-child {
    padding: 0 0 0 5px;
    border-right: 1px dotted #888;
}
.off {
    color: #777;
}
.focus {
    outline: 1px solid #000;
    outline-offset: -1px;
}
.fold {
    float: right;
    margin: 2px 4px 0 0;
    fill: none;
    stroke: #111;
}
td input {
    appearance: none;
    display: block;
    width: 13px;
    height: 13px;
    margin: 2px 0 0 1px;
    border: 1px solid #333;
    background: #fff;
}
td input:checked::before {
    content: "";
    display: block;
    width: 8px;
    height: 4px;
    margin: 2px 1px;
    border: solid #333;
    border-width: 0 0 1px 1px;
    transform: rotate(-45deg);
}

.caption {
    height: 175px;
    border-top: 3px solid #1ba39c;
    border-bottom: 2px solid #0a0a0a;
    background: #fff;
    text-align: center;
}
.caption p {
    padding-top: 7px;
    font: 500 79px/92px Inter, "Open Sans", sans-serif;
    color: #303842;
    white-space: nowrap;
}
```
